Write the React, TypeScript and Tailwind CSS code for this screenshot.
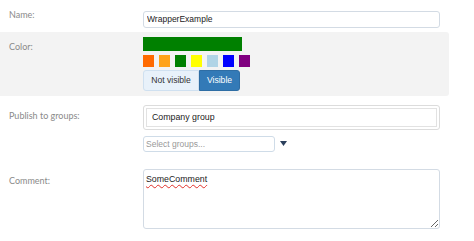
import React, { useState } from 'react';

const SWATCHES = ['#ff6a00', '#ffa31a', '#008000', '#ffff00', '#b0d4e6', '#0000ff', '#800080'];

const labelCls = 'w-[143px] shrink-0 pl-[9px] text-[9px] text-[#8a8a8a] font-["Lato",sans-serif]';

export default function App() {
  const [visible, setVisible] = useState(true);

  return (
    <div className="w-[474px] h-[241px] bg-white font-['Liberation_Sans',Arial,sans-serif]">
      <div className="w-[449px]">
        {/* Name */}
        <div className="flex h-[32px] pt-[5px]">
          <div className={`${labelCls} pt-[3px]`}>Name:</div>
          <div className="flex-1 pr-[9px]">
            <input
              defaultValue="WrapperExample"
              className="w-full h-[17px] px-[3px] border border-[#d3dbe4] rounded-[3px] text-[8.5px] text-[#222] outline-none"
            />
          </div>
        </div>

        {/* Color */}
        <div className="flex h-[64px] pt-[5px] bg-[#f3f3f3] rounded-r-[3px]">
          <div className={`${labelCls} pt-[3px]`}>Color:</div>
          <div className="flex flex-col">
            <div className="w-[99px] h-[14px] bg-[#008000]" />
            <div className="flex gap-[5px] mt-[4px]">
              {SWATCHES.map((c) => (
                <div key={c} className="w-[11px] h-[12px]" style={{ backgroundColor: c }} />
              ))}
            </div>
            <div className="flex mt-[3px] h-[21px] text-[8.6px]">
              <button
                onClick={() => setVisible(false)}
                className={`w-[56px] rounded-l-[3px] border ${
                  !visible ? 'bg-[#337ab7] text-white border-[#2e6da4]' : 'bg-[#e8f1fa] text-[#333] border-[#cfe0f0]'
                }`}
              >
                Not visible
              </button>
              <button
                onClick={() => setVisible(true)}
                className={`w-[41px] rounded-r-[3px] border ${
                  visible ? 'bg-[#337ab7] text-white border-[#2e6da4]' : 'bg-[#e8f1fa] text-[#333] border-[#cfe0f0]'
                }`}
              >
                Visible
              </button>
            </div>
          </div>
        </div>

        {/* Publish to groups */}
        <div className="flex h-[64px] pt-[9px]">
          <div className={`${labelCls} pt-[4px]`}>Publish to groups:</div>
          <div className="flex-1 pr-[9px]">
            <div className="h-[25px] border border-[#dcdcdc] rounded-[3px] p-[2px]">
              <div className="h-full border border-[#e2e2e2] flex items-center pl-[5px] text-[8.8px] text-[#222]">
                Company group
              </div>
            </div>
            <div className="flex items-center mt-[6px]">
              <input
                placeholder="Select groups..."
                className="w-[132px] h-[16px] px-[2px] border border-[#cfdce8] rounded-[3px] text-[8.5px] text-[#222] placeholder:text-[#999] outline-none"
              />
              <svg width="7" height="5" viewBox="0 0 7 5" className="ml-[5px] mb-[2px]">
                <path d="M0 0 L7 0 L3.5 5 Z" fill="#2b3f5c" />
              </svg>
            </div>
          </div>
        </div>

        {/* Comment */}
        <div className="flex h-[81px] pt-[9px]">
          <div className={`${labelCls} pt-[5px]`}>Comment:</div>
          <div className="flex-1 pr-[9px]">
            <textarea
              defaultValue="SomeComment"
              spellCheck={false}
              className="block w-full h-[60px] px-[2px] py-[3px] border border-[#d3dbe4] rounded-[3px] text-[8.8px] text-[#222] underline decoration-wavy decoration-[#e0302a] underline-offset-2 outline-none"
            />
          </div>
        </div>
      </div>
    </div>
  );
}
